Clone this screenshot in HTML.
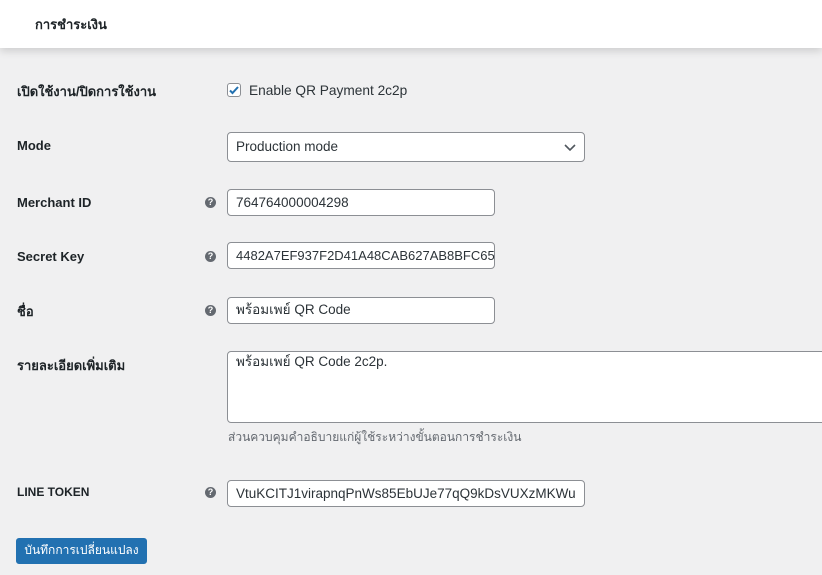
<!DOCTYPE html>
<html><head><meta charset="utf-8"><style>
body{margin:0;width:822px;height:575px;background:#f0f0f1;font-family:"Liberation Sans","Noto Sans CJK SC",sans-serif;font-size:13px;color:#1d2327;position:relative;overflow:hidden}
.hdr{position:absolute;left:0;top:0;width:822px;height:48px;background:#fff;box-shadow:0 3px 8px rgba(0,0,0,.15)}
.hdr span{position:absolute;left:35px;top:14px;font-weight:bold;font-size:13px}
.lbl{position:absolute;left:17px;font-weight:bold;font-size:13px}
.in{position:absolute;left:227px;background:#fff;border:1px solid #8c8f94;border-radius:4px;box-sizing:border-box;height:27px;padding:0 8px;line-height:25px;font-size:13.5px;white-space:nowrap;overflow:hidden;color:#2c3338}
.q{position:absolute;left:205px;width:11px;height:11px;border-radius:50%;background:#646970;color:#fff;font-size:9px;font-weight:bold;text-align:center;line-height:11px}
</style></head><body>
<div class="hdr"><span>การชำระเงิน</span></div>
<div class="lbl" style="top:81px">เปิดใช้งาน/ปิดการใช้งาน</div>
<div style="position:absolute;left:227px;top:83px;width:14px;height:14px;border:1px solid #8c8f94;border-radius:3px;background:#fff;box-sizing:border-box">
<svg width="14" height="14" style="position:absolute;left:-1px;top:-1px"><path d="M3 7.5l2.5 2.5L11 4" stroke="#2271b1" stroke-width="2" fill="none"/></svg></div>
<div style="position:absolute;left:249px;top:83px;color:#2c3338;font-size:13.7px">Enable QR Payment 2c2p</div>
<div class="lbl" style="top:138px">Mode</div>
<div class="in" style="top:132px;width:358px;height:30px;line-height:28px">Production mode
<svg width="12" height="8" style="position:absolute;right:8px;top:11px"><path d="M1 1l5 5 5-5" stroke="#50575e" stroke-width="1.6" fill="none"/></svg></div>
<div class="lbl" style="top:195px">Merchant ID</div><div class="q" style="top:197px">?</div>
<div class="in" style="top:189px;width:268px">764764000004298</div>
<div class="lbl" style="top:249px">Secret Key</div><div class="q" style="top:251px">?</div>
<div class="in" style="top:242px;width:268px;padding-right:0;font-size:13px">4482A7EF937F2D41A48CAB627AB8BFC65299</div>
<div class="lbl" style="top:301px">ชื่อ</div><div class="q" style="top:305px">?</div>
<div class="in" style="top:297px;width:268px;line-height:23px">พร้อมเพย์ QR Code</div>
<div class="lbl" style="top:355px">รายละเอียดเพิ่มเติม</div>
<div class="in" style="top:351px;width:600px;height:72px;line-height:20px;padding-top:0">พร้อมเพย์ QR Code 2c2p.</div>
<div style="position:absolute;left:228px;top:428px;font-size:12px;color:#646970">ส่วนควบคุมคำอธิบายแก่ผู้ใช้ระหว่างขั้นตอนการชำระเงิน</div>
<div class="lbl" style="top:485px;font-size:12px">LINE TOKEN</div><div class="q" style="top:487px">?</div>
<div class="in" style="top:480px;width:358px">VtuKCITJ1virapnqPnWs85EbUJe77qQ9kDsVUXzMKWu</div>
<div style="position:absolute;left:16px;top:538px;width:131px;height:26px;background:#2271b1;border:1px solid #2271b1;border-radius:3px;box-sizing:border-box;color:#fff;font-size:12px;text-align:center;line-height:22px">บันทึกการเปลี่ยนแปลง</div>
</body></html>
